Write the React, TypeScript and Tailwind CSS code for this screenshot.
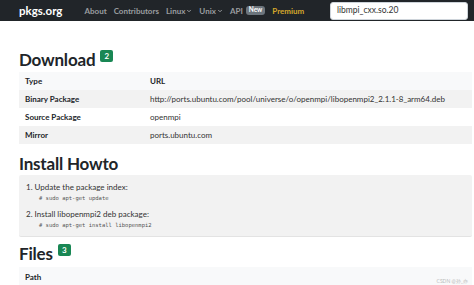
import { ChevronDown } from "lucide-react";

const rows = [
  { type: "Binary Package", url: "http://ports.ubuntu.com/pool/universe/o/openmpi/libopenmpi2_2.1.1-8_arm64.deb", shade: true },
  { type: "Source Package", url: "openmpi", shade: false },
  { type: "Mirror", url: "ports.ubuntu.com", shade: true },
];

function Badge({ n }: { n: string }) {
  return (
    <span className="ml-[5px] mt-[1px] inline-flex h-[12px] min-w-[13px] items-center justify-center self-start rounded-[2px] bg-[#198754] px-[3px] text-[8px] font-bold leading-none text-white">
      {n}
    </span>
  );
}

export default function App() {
  return (
    <div className="h-[285px] w-[474px] overflow-hidden bg-white font-['Lato','Open_Sans',sans-serif] text-[#212529]">
      <nav className="flex h-[21px] items-center bg-[#212529] pl-[19px] pr-[6px]">
        <span className="text-[11.5px] font-bold leading-none text-white">pkgs.org</span>
        <div className="ml-[22px] flex items-center gap-[7px] whitespace-nowrap text-[8px] font-bold leading-none text-[#9a9da0]">
          <span>About</span>
          <span>Contributors</span>
          <span className="flex items-center">
            Linux<ChevronDown className="ml-[1px] h-[6px] w-[6px]" strokeWidth={4} />
          </span>
          <span className="flex items-center">
            Unix<ChevronDown className="ml-[1px] h-[6px] w-[6px]" strokeWidth={4} />
          </span>
          <span className="flex items-center">
            API
            <span className="ml-[3px] rounded-[3px] bg-[#6c757d] px-[3px] py-[1.5px] text-[6.5px] font-bold text-white">New</span>
          </span>
          <span className="font-bold text-[#d4a72c]">Premium</span>
        </div>
        <div className="ml-auto flex h-[18px] w-[138px] items-center rounded-[3px] border border-[#ced4da] bg-white pl-[6px] text-[8.5px] text-[#333]">
          libmpi_cxx.so.20
        </div>
      </nav>

      <main className="pl-[19px] pr-[2px]">
        <h2 className="mt-[28px] flex items-center text-[17px] font-bold leading-[22px] tracking-[-0.2px]">
          Download <Badge n="2" />
        </h2>
        <table className="mt-[1px] w-full border-collapse whitespace-nowrap text-[8px]">
          <tbody>
            <tr className="h-[18px] bg-[#f8f9fa]">
              <td className="w-[131px] pl-[6px] font-bold">Type</td>
              <td className="font-bold">URL</td>
            </tr>
            {rows.map((r) => (
              <tr key={r.type} className={`h-[18px] ${r.shade ? "bg-[#f2f2f2]" : "bg-white"}`}>
                <td className="pl-[6px] font-bold">{r.type}</td>
                <td className="text-[#333]">{r.url}</td>
              </tr>
            ))}
          </tbody>
        </table>

        <h2 className="mt-[9px] text-[17px] font-bold leading-[22px] tracking-[-0.2px]">Install Howto</h2>
        <div className="flex h-[62px] flex-col justify-center gap-[6px] rounded-[2px] border-b border-[#e3e3e3] bg-[#f2f2f2] pl-[7px] text-[8px] text-[#333]">
          <div>
            <div className="leading-[11px]">1. Update the package index:</div>
            <div className="pl-[13px] font-['DejaVu_Sans_Mono',monospace] text-[5.5px] leading-[10px] text-[#555]"># sudo apt-get update</div>
          </div>
          <div>
            <div className="leading-[11px]">2. Install libopenmpi2 deb package:</div>
            <div className="pl-[13px] font-['DejaVu_Sans_Mono',monospace] text-[5.5px] leading-[10px] text-[#555]"># sudo apt-get install libopenmpi2</div>
          </div>
        </div>

        <h2 className="mt-[6px] flex items-center text-[17px] font-bold leading-[22px] tracking-[-0.2px]">
          Files <Badge n="3" />
        </h2>
        <div className="relative mt-[2px] flex h-[20px] items-center bg-[#f8f9fa] pl-[6px] text-[8px] font-bold">
          Path
          <span className="absolute bottom-[2px] right-[4px] text-[5px] font-normal text-[#bbb]">CSDN @孙_亦</span>
        </div>
      </main>
    </div>
  );
}
